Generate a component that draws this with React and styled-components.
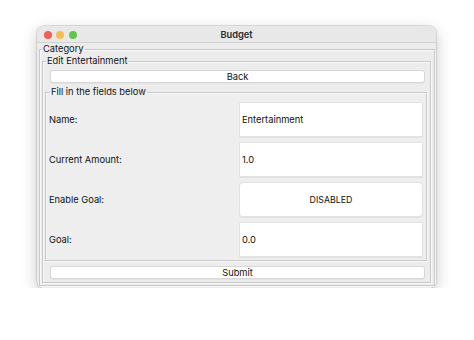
import React from "react";
import styled, { createGlobalStyle } from "styled-components";

const GlobalStyle = createGlobalStyle`
  html, body {
    margin: 0;
    padding: 0;
    background: #ffffff;
  }
  body {
    font-family: Inter, "Liberation Sans", Arial, sans-serif;
    font-size: 9.3px;
    color: #111111;
  }
`;

const Window = styled.div`
  width: 399px;
  margin: 26px 0 0 37px;
  background: #ececec;
  border-radius: 6px;
  box-shadow: 0 0 0 0.5px rgba(0, 0, 0, 0.22), 0 5px 16px rgba(0, 0, 0, 0.22);
  padding-bottom: 2px;
  overflow: hidden;
`;

const TitleBar = styled.div`
  position: relative;
  height: 16px;
  display: flex;
  align-items: center;
  justify-content: center;
  background: #e8e8e8;
  border-bottom: 1px solid #d2d2d2;
`;

const Lights = styled.div`
  position: absolute;
  left: 6.5px;
  top: 4.5px;
  display: flex;
  gap: 4.5px;
`;

const Light = styled.span`
  width: 8px;
  height: 8px;
  border-radius: 50%;
  background: ${(p) => p.$color};
`;

const Title = styled.div`
  font-weight: 600;
  font-size: 9.3px;
  color: #2a2a2a;
  margin-top: 1px;
`;

const Group = styled.fieldset`
  margin: ${(p) => p.$margin || "0"};
  padding: ${(p) => p.$padding || "0"};
  border: 1px solid #c9c9c9;
  box-shadow: inset 1px 1px 0 #f8f8f8, 1px 1px 0 #f8f8f8;
  background: ${(p) => p.$bg || "transparent"};
  min-width: 0;
`;

const Legend = styled.legend`
  padding: 0 1px;
  margin-left: ${(p) => p.$inset || 0}px;
  line-height: 12px;
  font-size: 9.3px;
  color: #111111;
`;

const Button = styled.button`
  display: block;
  box-sizing: border-box;
  height: 13px;
  width: calc(100% - 7px);
  margin: ${(p) => p.$margin || "0"} 2px 0 5px;
  padding: 0;
  background: #ffffff;
  border: 1px solid #d8d8d8;
  border-radius: 3px;
  box-shadow: 0 0.5px 0 rgba(0, 0, 0, 0.08);
  font-family: inherit;
  font-size: 9.3px;
  line-height: 11px;
  color: #111111;
  text-align: center;
`;

const Form = styled.div`
  display: grid;
  grid-template-columns: 1fr 1fr;
  grid-auto-rows: 40px;
`;

const Label = styled.div`
  display: flex;
  align-items: center;
  padding-left: 3px;
`;

const Field = styled.div`
  box-sizing: border-box;
  margin: 3px 3px 2px 3px;
  display: flex;
  align-items: center;
  justify-content: ${(p) => (p.$center ? "center" : "flex-start")};
  padding-left: ${(p) => (p.$center ? 0 : 2)}px;
  background: #ffffff;
  border: 1px solid #e2e2e2;
  border-radius: ${(p) => (p.$center ? 4 : 1)}px;
  box-shadow: 0 1px 0 rgba(0, 0, 0, 0.05);
  font-size: ${(p) => (p.$center ? 8.8 : 9.3)}px;
`;

const rows = [
  { label: "Name:", value: "Entertainment" },
  { label: "Current Amount:", value: "1.0" },
  { label: "Enable Goal:", value: "DISABLED", toggle: true },
  { label: "Goal:", value: "0.0" },
];

export default function App() {
  return (
    <>
      <GlobalStyle />
      <Window>
        <TitleBar>
          <Lights>
            <Light $color="#ee5f57" />
            <Light $color="#f5bd4f" />
            <Light $color="#60c452" />
          </Lights>
          <Title>Budget</Title>
        </TitleBar>
        <Group $margin="0 1px 0 2px" $padding="0 3px 2px 2px">
          <Legend>Category</Legend>
          <Group $padding="0 3px 3px 2px">
            <Legend $inset={1}>Edit Entertainment</Legend>
            <Button $margin="3px">Back</Button>
            <Group $margin="3px 0 0 0" $padding="1px 0 1px 0" $bg="#eeeeee">
              <Legend $inset={4}>Fill in the fields below</Legend>
              <Form>
                {rows.map((r) => (
                  <React.Fragment key={r.label}>
                    <Label>{r.label}</Label>
                    <Field $center={r.toggle}>{r.value}</Field>
                  </React.Fragment>
                ))}
              </Form>
            </Group>
            <Button $margin="5px">Submit</Button>
          </Group>
        </Group>
      </Window>
    </>
  );
}
